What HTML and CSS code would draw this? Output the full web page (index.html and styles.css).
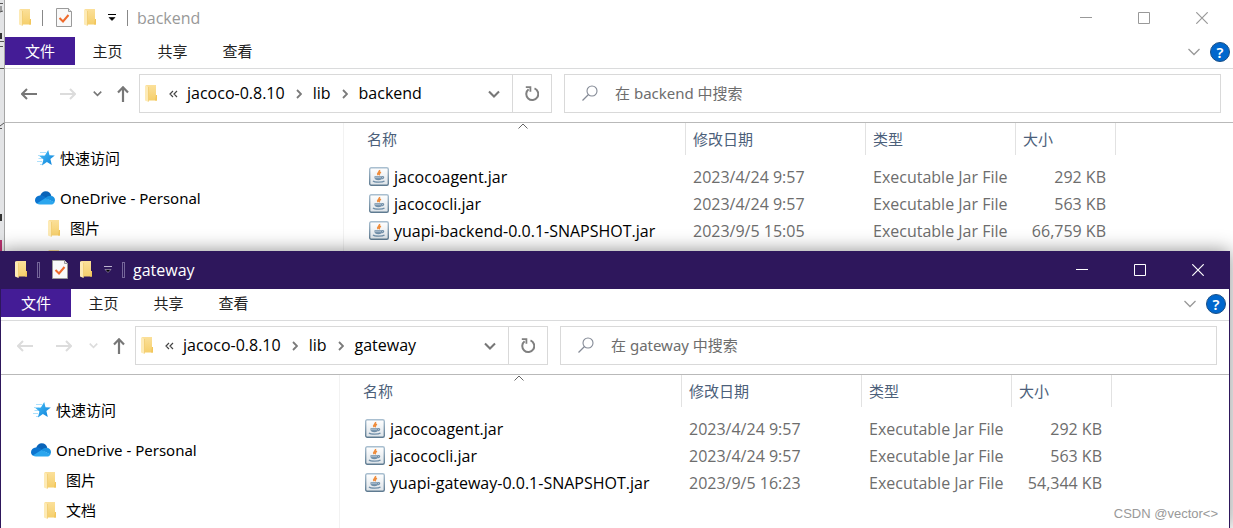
FILE: index.html
```
<!DOCTYPE html>
<html lang="zh-CN">
<head>
  <meta charset="UTF-8">
  <title>文件资源管理器</title>
  <meta name="viewport" content="width=device-width, initial-scale=1.0">
  <link rel="stylesheet" href="styles.css">
</head>
<body>

  <!-- shared icons -->
  <svg class="icon-defs" width="0" height="0" aria-hidden="true">
    <defs>
      <linearGradient id="folderBack" x1="0" y1="0" x2="0" y2="1">
        <stop offset="0" stop-color="#fbe09a"/>
        <stop offset="1" stop-color="#f5cf6c"/>
      </linearGradient>
      <linearGradient id="starFill" x1="0" y1="0" x2="1" y2="1">
        <stop offset="0" stop-color="#49c0f8"/>
        <stop offset="1" stop-color="#0c7fd8"/>
      </linearGradient>
      <linearGradient id="jarFill" x1="0" y1="0" x2="0" y2="1">
        <stop offset="0" stop-color="#ffffff"/>
        <stop offset="1" stop-color="#dde3e8"/>
      </linearGradient>
      <linearGradient id="jarEdge" x1="0" y1="0" x2="0" y2="1">
        <stop offset="0" stop-color="#a9bfd0"/>
        <stop offset="1" stop-color="#5f7b91"/>
      </linearGradient>
    </defs>
    <symbol id="folder" viewBox="0 0 12 17">
      <path d="M1 0h10v10h1v5.500H3z" fill="url(#folderBack)"/>
      <path d="M11 10h1v5.500h-2z" fill="#f2c65c"/>
      <path d="M0 .3L3.500 2v15L0 15.500z" fill="#fdeab5"/>
      <path d="M3.500 2v14.500" stroke="#efc968" stroke-width=".7"/>
    </symbol>
    <symbol id="check" viewBox="0 0 16 19">
      <path d="M.5.5h12l3 3v15H.5z" fill="#f9f9f9" stroke="#9a9a9a"/>
      <path d="M12.500.5v3h3" fill="#e4e4e4" stroke="#9a9a9a"/>
      <path d="M3.500 10l3.500 3.500L12.500 7" fill="none" stroke="#ee6a2c" stroke-width="2"/>
    </symbol>
    <symbol id="customize" viewBox="0 0 8 7">
      <path d="M0 .5h8" stroke="currentColor"/>
      <path d="M1 3.500h6L4 6.500z" fill="#000" stroke="currentColor" stroke-width=".6"/>
    </symbol>
    <symbol id="min" viewBox="0 0 12 12"><path d="M0 5.500h12" stroke="currentColor"/></symbol>
    <symbol id="max" viewBox="0 0 12 12"><path d="M.5.5h11v11H.5z" fill="none" stroke="currentColor"/></symbol>
    <symbol id="close" viewBox="0 0 12 12"><path d="M.3.3l11.400 11.400M11.700.3L.3 11.700" stroke="currentColor" stroke-width="1.200"/></symbol>
    <symbol id="arrow" viewBox="0 0 16 12">
      <path d="M1 6h15M6 1L1 6l5 5" fill="none" stroke="currentColor" stroke-width="2"/>
    </symbol>
    <symbol id="up" viewBox="0 0 12 16">
      <path d="M6 1v15M1 6.500L6 1.300l5 5.200" fill="none" stroke="currentColor" stroke-width="2.200"/>
    </symbol>
    <symbol id="down" viewBox="0 0 12 8">
      <path d="M1 1.500l5 5 5-5" fill="none" stroke="currentColor" stroke-width="2.100"/>
    </symbol>
    <symbol id="thin-down" viewBox="0 0 12 8">
      <path d="M.5 1L6 6.500 11.500 1" fill="none" stroke="currentColor" stroke-width="1.300"/>
    </symbol>
    <symbol id="right" viewBox="0 0 6 10">
      <path d="M1 1l4 4-4 4" fill="none" stroke="#7a7a7a" stroke-width="1.800"/>
    </symbol>
    <symbol id="more" viewBox="0 0 9 8">
      <path d="M4 1L1 4l3 3M8 1L5 4l3 3" fill="none" stroke="currentColor" stroke-width="1.200"/>
    </symbol>
    <symbol id="refresh" viewBox="0 0 14 15">
      <path d="M9.500 2.400A6 6 0 1 1 3.600 3.200" fill="none" stroke="#808080" stroke-width="2"/>
      <path d="M.8 1.200h4.600v4.600" fill="none" stroke="#808080" stroke-width="1.800"/>
    </symbol>
    <symbol id="search" viewBox="0 0 16 16">
      <circle cx="10" cy="6" r="5" fill="none" stroke="#848a96" stroke-width="1.100"/>
      <path d="M6.500 9.500L.5 15.500" stroke="#848a96" stroke-width="1.200"/>
    </symbol>
    <symbol id="star" viewBox="0 0 18 16">
      <path d="M11.200 0l1.300 5.200 5.300.4-4.400 3.300 1.400 6.100-4.900-3.100-5 3.600 1.500-6L2.400 6l5.500-.5z" fill="url(#starFill)"/>
      <path d="M3 2.500h6M1 5.500h5M1.500 8.500H5M0 11.500h5M3 14.500h2" stroke="#8ad2fa" stroke-width=".7"/>
    </symbol>
    <symbol id="onedrive" viewBox="0 0 20 14">
      <path d="M5 5.200C6 2 8.300.3 10.700.3c2.900 0 5 1.900 5.700 4.700l-5 3.500z" fill="#0a64b8"/>
      <path d="M4.800 4.600c2.200-.5 3.700.3 5 1.200l4.200 2.700L2 12.800C.7 11.900 0 10.700 0 9.300c0-2.500 2-4.500 4.800-4.700z" fill="#0c74cf"/>
      <path d="M16.100 4.900c2.300.1 3.900 1.800 3.900 4 0 1-.3 1.800-.8 2.500L10.500 7c1.700-1.500 3.500-2.300 5.600-2.100z" fill="#1a92e0"/>
      <path d="M1.800 12.600L10.500 7l9 4.200c-.7 1.500-1.800 2.300-3.500 2.300H5c-1.200 0-2.300-.3-3.200-.9z" fill="#2ba6ee"/>
    </symbol>
    <symbol id="jar" viewBox="0 0 20 19">
      <rect x=".7" y=".7" width="18.600" height="17.600" rx="1.500" fill="url(#jarFill)" stroke="url(#jarEdge)" stroke-width="1.400"/>
      <path d="M10.500 3c.8 2-3.300 2.700-1.500 5M12 5.300c-1.800.8-2.300 1.700-1.300 3" fill="none" stroke="#ef8b3a" stroke-width="1.500"/>
      <path d="M5.500 9.300h7.500v1.500c0 1.600-1 2.500-3.600 2.500s-3.900-.9-3.900-2.500z" fill="#6f8ea8"/>
      <path d="M6 10.700h6" stroke="#d6e0e8" stroke-width=".6"/>
      <path d="M13 9.800c2.200-.6 2.200 1.900-.3 2.100M4 14c1.500 1.500 9.500 1.600 11.500 0" fill="none" stroke="#6f8ea8" stroke-width="1.300"/>
    </symbol>
    <symbol id="sort" viewBox="0 0 10 6"><path d="M.5 5.500L5 1l4.500 4.500" fill="none" stroke="#666" stroke-width="1"/></symbol>
  </svg>

  <main class="desktop">

    <!-- edge of the document that is open behind the windows -->
    <svg class="desktop-edge" width="4" height="251" aria-hidden="true">
      <path d="M0 3.500h3M1 6v6M0 12l3-1M0 41.500h4M0 46.500h3M0 68.500h4M0 126l4-3M0 128.500h2" stroke="#555" fill="none"/>
      <path d="M0 33h2v6H0zM0 214h2v7H0z" fill="#333"/>
      <path d="M0 240h2v11H0z" fill="#b5306c"/>
    </svg>

    <section class="window window-back" aria-label="backend">
      <header class="titlebar">
        <svg class="folder"><use href="#folder"/></svg>
        <span class="bar"></span>
        <button class="quick" aria-label="属性"><svg class="check"><use href="#check"/></svg></button>
        <button class="quick" aria-label="新建文件夹"><svg class="folder"><use href="#folder"/></svg></button>
        <button class="quick" aria-label="自定义快速访问工具栏"><svg class="customize"><use href="#customize"/></svg></button>
        <span class="bar"></span>
        <h1>backend</h1>
        <div class="controls">
          <button aria-label="最小化"><svg><use href="#min"/></svg></button>
          <button aria-label="最大化"><svg><use href="#max"/></svg></button>
          <button aria-label="关闭"><svg><use href="#close"/></svg></button>
        </div>
      </header>

      <nav class="tabs">
        <button class="tab tab-file">文件</button>
        <button class="tab">主页</button>
        <button class="tab">共享</button>
        <button class="tab">查看</button>
        <button class="expand" aria-label="展开功能区"><svg><use href="#thin-down"/></svg></button>
        <button class="help" aria-label="帮助">?</button>
      </nav>

      <div class="navbar">
        <div class="history">
          <button class="go" aria-label="后退"><svg class="arrow"><use href="#arrow"/></svg></button>
          <button class="go" aria-label="前进" disabled><svg class="arrow flip"><use href="#arrow"/></svg></button>
          <button class="recent" aria-label="最近浏览的位置"><svg><use href="#down"/></svg></button>
          <button class="up" aria-label="上移"><svg><use href="#up"/></svg></button>
        </div>
        <div class="address">
          <svg class="folder"><use href="#folder"/></svg>
          <svg class="more"><use href="#more"/></svg>
          <a href="#">jacoco-0.8.10</a>
          <svg class="right"><use href="#right"/></svg>
          <a href="#">lib</a>
          <svg class="right"><use href="#right"/></svg>
          <a href="#">backend</a>
          <button class="drop" aria-label="上一个位置"><svg><use href="#down"/></svg></button>
          <button class="refresh" aria-label="刷新"><svg><use href="#refresh"/></svg></button>
        </div>
        <label class="search">
          <svg><use href="#search"/></svg>
          <input type="text" placeholder="在 backend 中搜索" aria-label="在 backend 中搜索">
        </label>
      </div>

      <div class="content">
        <aside class="sidebar">
          <a class="quick-access" href="#"><svg class="star"><use href="#star"/></svg>快速访问</a>
          <a href="#"><svg class="onedrive"><use href="#onedrive"/></svg>OneDrive - Personal</a>
          <a class="child" href="#"><svg class="folder"><use href="#folder"/></svg>图片</a>
          <a class="child" href="#"><svg class="folder"><use href="#folder"/></svg>文档</a>
        </aside>
        <div class="files">
          <table>
            <thead>
              <tr>
                <th class="name">名称<svg class="sort"><use href="#sort"/></svg></th>
                <th class="date">修改日期</th>
                <th class="type">类型</th>
                <th class="size">大小</th>
              </tr>
            </thead>
            <tbody>
              <tr>
                <td><svg class="jar"><use href="#jar"/></svg>jacocoagent.jar</td>
                <td>2023/4/24 9:57</td>
                <td>Executable Jar File</td>
                <td>292 KB</td>
              </tr>
              <tr>
                <td><svg class="jar"><use href="#jar"/></svg>jacococli.jar</td>
                <td>2023/4/24 9:57</td>
                <td>Executable Jar File</td>
                <td>563 KB</td>
              </tr>
              <tr>
                <td><svg class="jar"><use href="#jar"/></svg>yuapi-backend-0.0.1-SNAPSHOT.jar</td>
                <td>2023/9/5 15:05</td>
                <td>Executable Jar File</td>
                <td>66,759 KB</td>
              </tr>
            </tbody>
          </table>
        </div>
      </div>
    </section>

    <section class="window window-front" aria-label="gateway">
      <header class="titlebar">
        <svg class="folder"><use href="#folder"/></svg>
        <span class="bar"></span>
        <button class="quick" aria-label="属性"><svg class="check"><use href="#check"/></svg></button>
        <button class="quick" aria-label="新建文件夹"><svg class="folder"><use href="#folder"/></svg></button>
        <button class="quick" aria-label="自定义快速访问工具栏"><svg class="customize"><use href="#customize"/></svg></button>
        <span class="bar"></span>
        <h1>gateway</h1>
        <div class="controls">
          <button aria-label="最小化"><svg><use href="#min"/></svg></button>
          <button aria-label="最大化"><svg><use href="#max"/></svg></button>
          <button aria-label="关闭"><svg><use href="#close"/></svg></button>
        </div>
      </header>

      <nav class="tabs">
        <button class="tab tab-file">文件</button>
        <button class="tab">主页</button>
        <button class="tab">共享</button>
        <button class="tab">查看</button>
        <button class="expand" aria-label="展开功能区"><svg><use href="#thin-down"/></svg></button>
        <button class="help" aria-label="帮助">?</button>
      </nav>

      <div class="navbar">
        <div class="history">
          <button class="go" aria-label="后退" disabled><svg class="arrow"><use href="#arrow"/></svg></button>
          <button class="go" aria-label="前进" disabled><svg class="arrow flip"><use href="#arrow"/></svg></button>
          <button class="recent" aria-label="最近浏览的位置" disabled><svg><use href="#down"/></svg></button>
          <button class="up" aria-label="上移"><svg><use href="#up"/></svg></button>
        </div>
        <div class="address">
          <svg class="folder"><use href="#folder"/></svg>
          <svg class="more"><use href="#more"/></svg>
          <a href="#">jacoco-0.8.10</a>
          <svg class="right"><use href="#right"/></svg>
          <a href="#">lib</a>
          <svg class="right"><use href="#right"/></svg>
          <a href="#">gateway</a>
          <button class="drop" aria-label="上一个位置"><svg><use href="#down"/></svg></button>
          <button class="refresh" aria-label="刷新"><svg><use href="#refresh"/></svg></button>
        </div>
        <label class="search">
          <svg><use href="#search"/></svg>
          <input type="text" placeholder="在 gateway 中搜索" aria-label="在 gateway 中搜索">
        </label>
      </div>

      <div class="content">
        <aside class="sidebar">
          <a class="quick-access" href="#"><svg class="star"><use href="#star"/></svg>快速访问</a>
          <a href="#"><svg class="onedrive"><use href="#onedrive"/></svg>OneDrive - Personal</a>
          <a class="child" href="#"><svg class="folder"><use href="#folder"/></svg>图片</a>
          <a class="child" href="#"><svg class="folder"><use href="#folder"/></svg>文档</a>
        </aside>
        <div class="files">
          <table>
            <thead>
              <tr>
                <th class="name">名称<svg class="sort"><use href="#sort"/></svg></th>
                <th class="date">修改日期</th>
                <th class="type">类型</th>
                <th class="size">大小</th>
              </tr>
            </thead>
            <tbody>
              <tr>
                <td><svg class="jar"><use href="#jar"/></svg>jacocoagent.jar</td>
                <td>2023/4/24 9:57</td>
                <td>Executable Jar File</td>
                <td>292 KB</td>
              </tr>
              <tr>
                <td><svg class="jar"><use href="#jar"/></svg>jacococli.jar</td>
                <td>2023/4/24 9:57</td>
                <td>Executable Jar File</td>
                <td>563 KB</td>
              </tr>
              <tr>
                <td><svg class="jar"><use href="#jar"/></svg>yuapi-gateway-0.0.1-SNAPSHOT.jar</td>
                <td>2023/9/5 16:23</td>
                <td>Executable Jar File</td>
                <td>54,344 KB</td>
              </tr>
            </tbody>
          </table>
        </div>
      </div>
    </section>

    <div class="watermark">CSDN @vector&lt;&gt;</div>
  </main>

</body>
</html>
```
FILE: styles.css
```
* {
  box-sizing: border-box;
}

body {
  margin: 0;
  height: 100vh;
  overflow: hidden;
  background: #e3e4e6;
  font-family: "Noto Sans", "Noto Sans CJK SC", sans-serif;
  font-size: 15px;
  line-height: 20px;
  color: #000;
}

.icon-defs {
  position: absolute;
}

svg {
  display: block;
  flex: none;
}

button {
  display: flex;
  align-items: center;
  justify-content: center;
  padding: 0;
  border: none;
  background: none;
  font: inherit;
  color: inherit;
}

a {
  color: inherit;
  text-decoration: none;
}

.desktop {
  position: relative;
  height: 100%;
}

/* windows */
.window {
  position: absolute;
  bottom: 0;
  display: flex;
  flex-direction: column;
  border: 1px solid #a5a5a5;
  border-bottom: none;
  background: #fff;
  overflow: hidden;
}

.window-back {
  top: -1px;
  left: 4px;
  right: -1px;
}

.window-front {
  top: 251px;
  left: 0;
  right: 3px;
  border-color: #2e175c;
  box-shadow: 0 0 18px rgba(0, 0, 0, 0.45);
}

.folder {
  width: 12px;
  height: 17px;
}

/* title bar */
.titlebar {
  display: flex;
  align-items: center;
  flex: none;
  height: 37px;
  padding: 0 2px 2px 14px;
  color: #999;
}

.window-front .titlebar {
  background: #2e175c;
  color: #fff;
}

.bar {
  width: 1px;
  height: 16px;
  margin-left: 11px;
  background: #888;
}

.window-front .bar {
  width: 3px;
  margin-left: 10px;
  margin-right: -1px;
  border: 1px solid #75669a;
  background: none;
}

.quick {
  margin-left: 12px;
}

.bar + .quick {
  margin-left: 13px;
}

.customize {
  width: 8px;
  height: 7px;
  color: #000;
}

.customize + .bar {
  margin-left: 12px;
}

.check {
  width: 16px;
  height: 19px;
}

.window-front .customize {
  color: #bdb4cf;
}

h1 {
  margin: 0 0 0 9px;
  font-family: "Open Sans", "Noto Sans CJK SC", sans-serif;
  font-size: 16px;
  font-weight: normal;
}

.controls {
  display: flex;
  margin-left: auto;
}

.controls button {
  width: 58px;
  height: 35px;
}

.controls svg {
  width: 12px;
  height: 12px;
}

/* ribbon tabs */
.tabs {
  display: flex;
  align-items: flex-start;
  flex: none;
  height: 32px;
  padding-right: 3px;
  border-bottom: 1px solid #dadbdc;
}

.tab {
  width: 65px;
  height: 28px;
  color: #222;
}

.tab-file {
  width: 70px;
  background: #441c96;
  color: #fff;
}

.expand {
  width: 30px;
  height: 30px;
  margin-left: auto;
  color: #999;
}

.expand svg {
  width: 12px;
  height: 8px;
}

.help {
  width: 20px;
  height: 20px;
  margin: 5px 0 0 1px;
  border: 1px solid #1a4f86;
  border-radius: 50%;
  background: #0067cd;
  color: #fff;
  font-weight: 600;
}

/* address bar */
.navbar {
  display: flex;
  flex: none;
  height: 54px;
  padding: 5px 12px 9px 0;
  border-bottom: 1px solid #b9b9b9;
}

.history {
  display: flex;
  align-items: center;
  width: 134px;
  padding-left: 16px;
  color: #777;
}

.history button:disabled {
  color: #dcdcdc;
}

.go {
  width: 39px;
  justify-content: flex-start;
}

.arrow {
  width: 16px;
  height: 12px;
}

.flip {
  transform: scaleX(-1);
}

.recent {
  width: 9px;
  margin-left: -6px;
}

.recent svg {
  width: 9px;
  height: 7px;
}

.up {
  margin-left: 15px;
}

.up svg {
  width: 12px;
  height: 16px;
}

.address {
  display: flex;
  align-items: center;
  flex: none;
  width: 413px;
  height: 39px;
  padding-left: 5px;
  border: 1px solid #d9d9d9;
  font-family: "Open Sans", "Noto Sans CJK SC", sans-serif;
  font-size: 16px;
}

.address a {
  padding-bottom: 2px;
}

.more {
  width: 9px;
  height: 8px;
  margin: 0 9px 0 12px;
  color: #444;
}

.right {
  width: 6px;
  height: 10px;
  margin: 0 11px;
}

.drop {
  width: 36px;
  height: 100%;
  margin-left: auto;
  color: #777;
}

.drop svg {
  width: 12px;
  height: 8px;
}

.refresh {
  width: 39px;
  height: 100%;
  border-left: 1px solid #d9d9d9;
}

.refresh svg {
  width: 14px;
  height: 15px;
}

.search {
  display: flex;
  align-items: center;
  flex: 1;
  height: 39px;
  margin-left: 12px;
  padding: 0 0 2px 17px;
  border: 1px solid #d9d9d9;
}

.search svg {
  width: 16px;
  height: 16px;
}

.search input {
  flex: 1;
  min-width: 0;
  margin-left: 17px;
  padding: 0;
  border: none;
  outline: none;
  background: none;
  font: inherit;
}

.search input::placeholder {
  color: #6d6d6d;
  opacity: 1;
}

/* sidebar and file list */
.content {
  display: flex;
  flex: 1;
  min-height: 0;
}

.sidebar {
  flex: none;
  width: 339px;
  padding: 20px 0 0 30px;
  border-right: 1px solid #f2f2f2;
}

.sidebar a {
  display: flex;
  align-items: center;
  height: 30px;
}

.sidebar .quick-access {
  margin-bottom: 10px;
}

.star {
  width: 18px;
  height: 16px;
  margin: 0 5px 0 2px;
}

.onedrive {
  width: 20px;
  height: 14px;
  margin-right: 5px;
}

.sidebar .child {
  padding-left: 13px;
}

.child .folder {
  margin-right: 10px;
}

.files {
  flex: 1;
  min-width: 0;
}

table {
  width: 772px;
  table-layout: fixed;
  border-collapse: separate;
  border-spacing: 0;
}

th {
  position: relative;
  height: 32px;
  padding: 0 7px;
  border-right: 1px solid #e2e2e2;
  text-align: left;
  font-weight: normal;
  color: #4c607a;
}

th.name {
  width: 342px;
  padding-left: 23px;
}

th.date {
  width: 180px;
}

th.type {
  width: 150px;
}

th.size {
  width: 100px;
}

.sort {
  position: absolute;
  top: 0;
  left: calc(50% + 3px);
  width: 10px;
  height: 6px;
}

tbody {
  font-family: "Open Sans", "Noto Sans CJK SC", sans-serif;
  font-size: 16px;
}

tbody::before {
  content: "";
  display: block;
  height: 8px;
}

td {
  height: 27px;
  padding: 0 7px;
  white-space: nowrap;
  color: #6d6d6d;
}

td:first-child {
  padding-left: 25px;
  color: #000;
}

td:last-child {
  padding-right: 10px;
  text-align: right;
}

.jar {
  display: inline-block;
  width: 20px;
  height: 19px;
  margin-right: 5px;
  vertical-align: -3px;
}

.watermark {
  position: absolute;
  right: 15px;
  bottom: 4px;
  font-family: "Liberation Sans", sans-serif;
  font-size: 13px;
  color: #999;
}
```
